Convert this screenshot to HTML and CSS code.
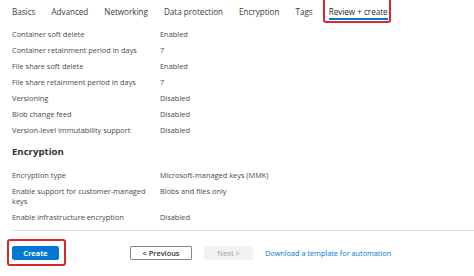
FILE: index.html
```html
<!DOCTYPE html>
<html lang="en">
<head>
    <meta charset="UTF-8">
    <meta name="viewport" content="width=device-width, initial-scale=1.0">
    <title>Create storage account</title>
    <link rel="stylesheet" href="styles.css">
</head>
<body>
    <!-- 탭 메뉴 -->
    <nav class="tabs">
        <span class="tab">Basics</span>
        <span class="tab">Advanced</span>
        <span class="tab">Networking</span>
        <span class="tab">Data protection</span>
        <span class="tab">Encryption</span>
        <span class="tab">Tags</span>
        <span class="tab active mark">Review + create</span>
    </nav>

    <!-- 요약 내용 (스크롤 영역) -->
    <div class="summary">
        <div class="summary-inner">
            <dl class="rows">
                <dt>Container soft delete</dt><dd>Enabled</dd>
                <dt>Container retainment period in days</dt><dd>7</dd>
                <dt>File share soft delete</dt><dd>Enabled</dd>
                <dt>File share retainment period in days</dt><dd>7</dd>
                <dt>Versioning</dt><dd>Disabled</dd>
                <dt>Blob change feed</dt><dd>Disabled</dd>
                <dt>Version-level immutability support</dt><dd>Disabled</dd>
            </dl>

            <h2 class="section-title">Encryption</h2>
            <dl class="rows">
                <dt>Encryption type</dt><dd>Microsoft-managed keys (MMK)</dd>
                <dt>Enable support for customer-managed keys</dt><dd>Blobs and files only</dd>
                <dt>Enable infrastructure encryption</dt><dd>Disabled</dd>
            </dl>
        </div>
    </div>

    <!-- 하단 버튼 -->
    <footer class="footer">
        <button class="btn btn-primary mark">Create</button>
        <button class="btn btn-default">&lt; Previous</button>
        <button class="btn btn-disabled" disabled>Next &gt;</button>
        <a class="link" href="#">Download a template for automation</a>
    </footer>
</body>
</html>
```

FILE: styles.css
```css
/* 기본 설정 */
body {margin: 0; font-family: "Open Sans", "Noto Sans", sans-serif; color: #3b3a39; background: #fff; width: 474px; height: 276px; overflow: hidden;}

/* 탭 */
.tabs {display: flex; height: 32px; padding: 0 0 0 12px; box-sizing: border-box; align-items: flex-start;}
.tab {font-size: 8.1px; color: #3b3a39; margin-right: 16px; padding-top: 6px; line-height: 11px; white-space: nowrap;}
.tab.active {color: #201f1e; padding: 6px 0 1px; border-bottom: 2px solid #0078d4;}

/* 빨간 강조 테두리 (스크린샷 주석) */
.mark {position: relative;}
.mark::after {content: ""; position: absolute; left: -6px; right: -3px; top: -3px; bottom: -5px; border: 2px solid #d9262f; border-radius: 3px; pointer-events: none;}
.btn.mark::after {left: -6px; right: -8px; top: -8px; bottom: -7px;}

/* 요약 */
.summary {height: 198px; overflow: hidden;}
.summary-inner {margin-top: -3px; padding-left: 12px;}
.rows {display: grid; grid-template-columns: 148px 1fr; margin: 0; font-size: 7.4px; line-height: 10px; row-gap: 6px;}
.rows dt {margin: 0; color: #4a4a4a; padding-right: 6px;}
.rows dd {margin: 0; color: #4a4a4a;}
.section-title {font-size: 9.6px; font-weight: 700; color: #323130; margin: 11px 0 12px; line-height: 12px;}

/* 하단 */
.footer {display: flex; align-items: flex-start; margin-left: 12px; border-top: 1px solid #e1dfdd; padding-top: 15px; height: 46px; box-sizing: border-box;}
.btn {font-family: inherit; font-size: 7.4px; height: 14px; padding: 0; box-sizing: border-box; line-height: 12px; cursor: pointer;}
.btn-primary {width: 47px; background: #0078d4; color: #fff; border: 1px solid #0078d4; font-weight: 700; border-radius: 2px;}
.btn-default {width: 62px; margin-left: 71px; background: #fff; color: #323130; border: 1px solid #8a8886; font-weight: 600; border-radius: 1px;}
.btn-disabled {width: 49px; margin-left: 12px; background: #f3f2f1; color: #a19f9d; border: 1px solid #f3f2f1; cursor: default;}
.link {font-size: 7.3px; color: #0078d4; text-decoration: none; margin-left: 12px; line-height: 14px;}
```
